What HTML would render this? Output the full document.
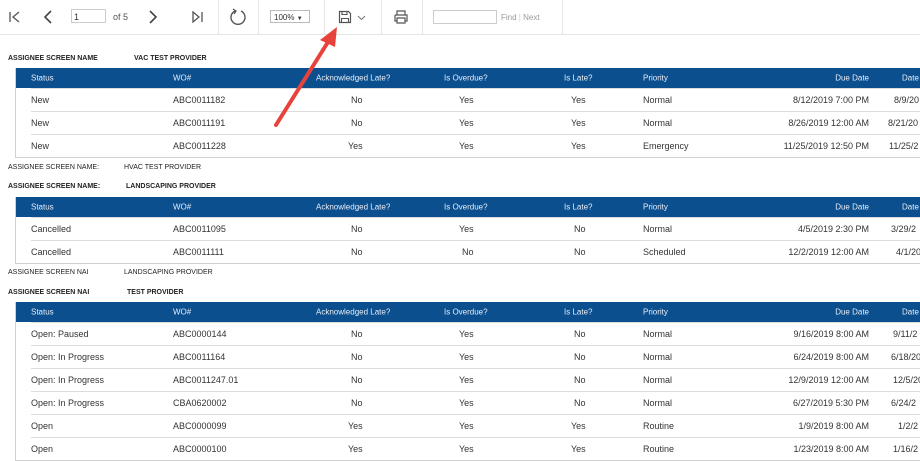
<html><head><style>
body{margin:0;width:920px;height:454px;overflow:hidden;background:#fff;font-family:"Liberation Sans",Arial,sans-serif;position:relative;color:#333}
.tb{position:absolute;left:0;top:0;width:920px;height:34px;border-bottom:1px solid #e6e6e6;background:#fff}
.sep{position:absolute;top:0;width:1px;height:34px;background:#e6e6e6}
.a{position:absolute;white-space:nowrap}
.lbl{position:absolute;font-size:7px;color:#222;white-space:nowrap}
.lbl b{font-weight:bold}
.tbl{position:absolute;left:15px;width:910px;border:1px solid #d0d0d0;border-top:none}
.hd{height:20px;background:#0b4f8f;color:#e8eef6;font-size:8px;position:relative}
.r{height:22px;position:relative;font-size:9px;color:#333;border-top:1px solid #dcdcdc;margin-left:15px}
.r:first-of-type{border-top:none;height:23px}
.c{position:absolute;top:50%;transform:translateY(-50%);white-space:nowrap}
.r .dd{right:57px}
.hd .dd{right:57px}
</style></head><body>
<div class="tb">
<svg class="a" style="left:8px;top:10px" width="14" height="14" viewBox="0 0 14 14"><path d="M2 2v10M11 2L5 7l6 5" fill="none" stroke="#555" stroke-width="1.3"/></svg>
<svg class="a" style="left:42px;top:9px" width="12" height="16" viewBox="0 0 12 16"><path d="M9 2L3 8l6 6" fill="none" stroke="#444" stroke-width="1.6"/></svg>
<div class="a" style="left:71px;top:9px;width:35px;height:14px;border:1px solid #ccc;font-size:9px;line-height:14px;padding-left:2px;box-sizing:border-box">1</div>
<div class="a" style="left:113px;top:12px;font-size:9px;color:#555">of 5</div>
<svg class="a" style="left:147px;top:9px" width="12" height="16" viewBox="0 0 12 16"><path d="M3 2l6 6-6 6" fill="none" stroke="#444" stroke-width="1.6"/></svg>
<svg class="a" style="left:190px;top:10px" width="14" height="14" viewBox="0 0 14 14"><path d="M3 2l6 5-6 5zM12 2v10" fill="none" stroke="#555" stroke-width="1.3"/></svg>
<div class="sep" style="left:218px"></div>
<svg class="a" style="left:229px;top:8px" width="18" height="18" viewBox="0 0 18 18"><path d="M6 3A7 7 0 1 0 12 3" fill="none" stroke="#555" stroke-width="1.4"/><path d="M4 1l3 2-2 3" fill="none" stroke="#555" stroke-width="1.3"/></svg>
<div class="sep" style="left:258px"></div>
<div class="a" style="left:270px;top:10px;width:40px;height:13px;border:1px solid #bbb;font-size:8px;line-height:13px;padding-left:3px;box-sizing:border-box">100% <span style="font-size:6px">▼</span></div>
<div class="sep" style="left:324px"></div>
<svg class="a" style="left:338px;top:10px" width="14" height="14" viewBox="0 0 14 14"><path d="M1.5 1.5h9l2 2v9h-11z" fill="none" stroke="#555" stroke-width="1.2"/><path d="M4 1.5v3h5v-3M3.5 12.5v-4h7v4" fill="none" stroke="#555" stroke-width="1.1"/></svg>
<svg class="a" style="left:357px;top:15px" width="9" height="6" viewBox="0 0 9 6"><path d="M1 1l3.5 3.5L8 1" fill="none" stroke="#777" stroke-width="1"/></svg>
<div class="sep" style="left:381px"></div>
<svg class="a" style="left:393px;top:9px" width="16" height="16" viewBox="0 0 16 16"><path d="M4 6V2h8v4M2 6h12v6h-2M4 12H2V6M4 9h8v5H4z" fill="none" stroke="#555" stroke-width="1.2"/></svg>
<div class="sep" style="left:422px"></div>
<div class="a" style="left:433px;top:10px;width:64px;height:14px;border:1px solid #ccc;box-sizing:border-box"></div>
<div class="a" style="left:501px;top:13px;font-size:8px;color:#999">Find <span style="color:#ccc">|</span> Next</div>
<div class="sep" style="left:562px"></div>
</div>

<div class="lbl" style="left:8px;top:55px"><b>ASSIGNEE SCREEN NAME</b></div><div class="lbl" style="left:134px;top:55px"><b>VAC TEST PROVIDER</b></div>
<div class="tbl" style="top:68px">
<div class="hd"><span class="c" style="left:15px">Status</span><span class="c" style="left:157px">WO#</span><span class="c" style="left:300px">Acknowledged Late?</span><span class="c" style="left:428px">Is Overdue?</span><span class="c" style="left:548px">Is Late?</span><span class="c" style="left:627px">Priority</span><span class="c dd">Due Date</span><span class="c" style="left:886px">Date</span></div>
<div class="r"><span class="c" style="left:0">New</span><span class="c" style="left:142px">ABC0011182</span><span class="c" style="left:320px">No</span><span class="c" style="left:428px">Yes</span><span class="c" style="left:540px">Yes</span><span class="c" style="left:612px">Normal</span><span class="c dd">8/12/2019 7:00 PM</span><span class="c" style="left:863px">8/9/20</span></div>
<div class="r"><span class="c" style="left:0">New</span><span class="c" style="left:142px">ABC0011191</span><span class="c" style="left:320px">No</span><span class="c" style="left:428px">Yes</span><span class="c" style="left:540px">Yes</span><span class="c" style="left:612px">Normal</span><span class="c dd">8/26/2019 12:00 AM</span><span class="c" style="left:857px">8/21/20</span></div>
<div class="r"><span class="c" style="left:0">New</span><span class="c" style="left:142px">ABC0011228</span><span class="c" style="left:317px">Yes</span><span class="c" style="left:428px">Yes</span><span class="c" style="left:540px">Yes</span><span class="c" style="left:612px">Emergency</span><span class="c dd">11/25/2019 12:50 PM</span><span class="c" style="left:858px">11/25/2</span></div>
</div>

<div class="lbl" style="left:8px;top:164px">ASSIGNEE SCREEN NAME:</div><div class="lbl" style="left:124px;top:164px">HVAC TEST PROVIDER</div>
<div class="lbl" style="left:8px;top:183px"><b>ASSIGNEE SCREEN NAME:</b></div><div class="lbl" style="left:126px;top:183px"><b>LANDSCAPING PROVIDER</b></div>
<div class="tbl" style="top:197px">
<div class="hd"><span class="c" style="left:15px">Status</span><span class="c" style="left:157px">WO#</span><span class="c" style="left:300px">Acknowledged Late?</span><span class="c" style="left:428px">Is Overdue?</span><span class="c" style="left:548px">Is Late?</span><span class="c" style="left:627px">Priority</span><span class="c dd">Due Date</span><span class="c" style="left:886px">Date</span></div>
<div class="r"><span class="c" style="left:0">Cancelled</span><span class="c" style="left:142px">ABC0011095</span><span class="c" style="left:320px">No</span><span class="c" style="left:428px">Yes</span><span class="c" style="left:543px">No</span><span class="c" style="left:612px">Normal</span><span class="c dd">4/5/2019 2:30 PM</span><span class="c" style="left:860px">3/29/2</span></div>
<div class="r"><span class="c" style="left:0">Cancelled</span><span class="c" style="left:142px">ABC0011111</span><span class="c" style="left:320px">No</span><span class="c" style="left:431px">No</span><span class="c" style="left:543px">No</span><span class="c" style="left:612px">Scheduled</span><span class="c dd">12/2/2019 12:00 AM</span><span class="c" style="left:865px">4/1/20</span></div>
</div>

<div class="lbl" style="left:8px;top:269px">ASSIGNEE SCREEN NAI</div><div class="lbl" style="left:124px;top:269px">LANDSCAPING PROVIDER</div>
<div class="lbl" style="left:8px;top:289px"><b>ASSIGNEE SCREEN NAI</b></div><div class="lbl" style="left:127px;top:289px"><b>TEST PROVIDER</b></div>
<div class="tbl" style="top:302px">
<div class="hd"><span class="c" style="left:15px">Status</span><span class="c" style="left:157px">WO#</span><span class="c" style="left:300px">Acknowledged Late?</span><span class="c" style="left:428px">Is Overdue?</span><span class="c" style="left:548px">Is Late?</span><span class="c" style="left:627px">Priority</span><span class="c dd">Due Date</span><span class="c" style="left:886px">Date</span></div>
<div class="r"><span class="c" style="left:0">Open: Paused</span><span class="c" style="left:142px">ABC0000144</span><span class="c" style="left:320px">No</span><span class="c" style="left:428px">Yes</span><span class="c" style="left:543px">No</span><span class="c" style="left:612px">Normal</span><span class="c dd">9/16/2019 8:00 AM</span><span class="c" style="left:862px">9/11/2</span></div>
<div class="r"><span class="c" style="left:0">Open: In Progress</span><span class="c" style="left:142px">ABC0011164</span><span class="c" style="left:320px">No</span><span class="c" style="left:428px">Yes</span><span class="c" style="left:543px">No</span><span class="c" style="left:612px">Normal</span><span class="c dd">6/24/2019 8:00 AM</span><span class="c" style="left:860px">6/18/20</span></div>
<div class="r"><span class="c" style="left:0">Open: In Progress</span><span class="c" style="left:142px">ABC0011247.01</span><span class="c" style="left:320px">No</span><span class="c" style="left:428px">Yes</span><span class="c" style="left:543px">No</span><span class="c" style="left:612px">Normal</span><span class="c dd">12/9/2019 12:00 AM</span><span class="c" style="left:862px">12/5/20</span></div>
<div class="r"><span class="c" style="left:0">Open: In Progress</span><span class="c" style="left:142px">CBA0620002</span><span class="c" style="left:320px">No</span><span class="c" style="left:428px">Yes</span><span class="c" style="left:543px">No</span><span class="c" style="left:612px">Normal</span><span class="c dd">6/27/2019 5:30 PM</span><span class="c" style="left:860px">6/24/2</span></div>
<div class="r"><span class="c" style="left:0">Open</span><span class="c" style="left:142px">ABC0000099</span><span class="c" style="left:317px">Yes</span><span class="c" style="left:428px">Yes</span><span class="c" style="left:540px">Yes</span><span class="c" style="left:612px">Routine</span><span class="c dd">1/9/2019 8:00 AM</span><span class="c" style="left:867px">1/2/2</span></div>
<div class="r"><span class="c" style="left:0">Open</span><span class="c" style="left:142px">ABC0000100</span><span class="c" style="left:317px">Yes</span><span class="c" style="left:428px">Yes</span><span class="c" style="left:540px">Yes</span><span class="c" style="left:612px">Routine</span><span class="c dd">1/23/2019 8:00 AM</span><span class="c" style="left:862px">1/16/2</span></div>
</div>

<svg class="a" style="left:0;top:0" width="920" height="454"><line x1="276" y1="125" x2="328" y2="42" stroke="#e8433a" stroke-width="4" stroke-linecap="round"/><polygon points="337,27 320,40 335,47" fill="#e8433a"/></svg>
</body></html>
